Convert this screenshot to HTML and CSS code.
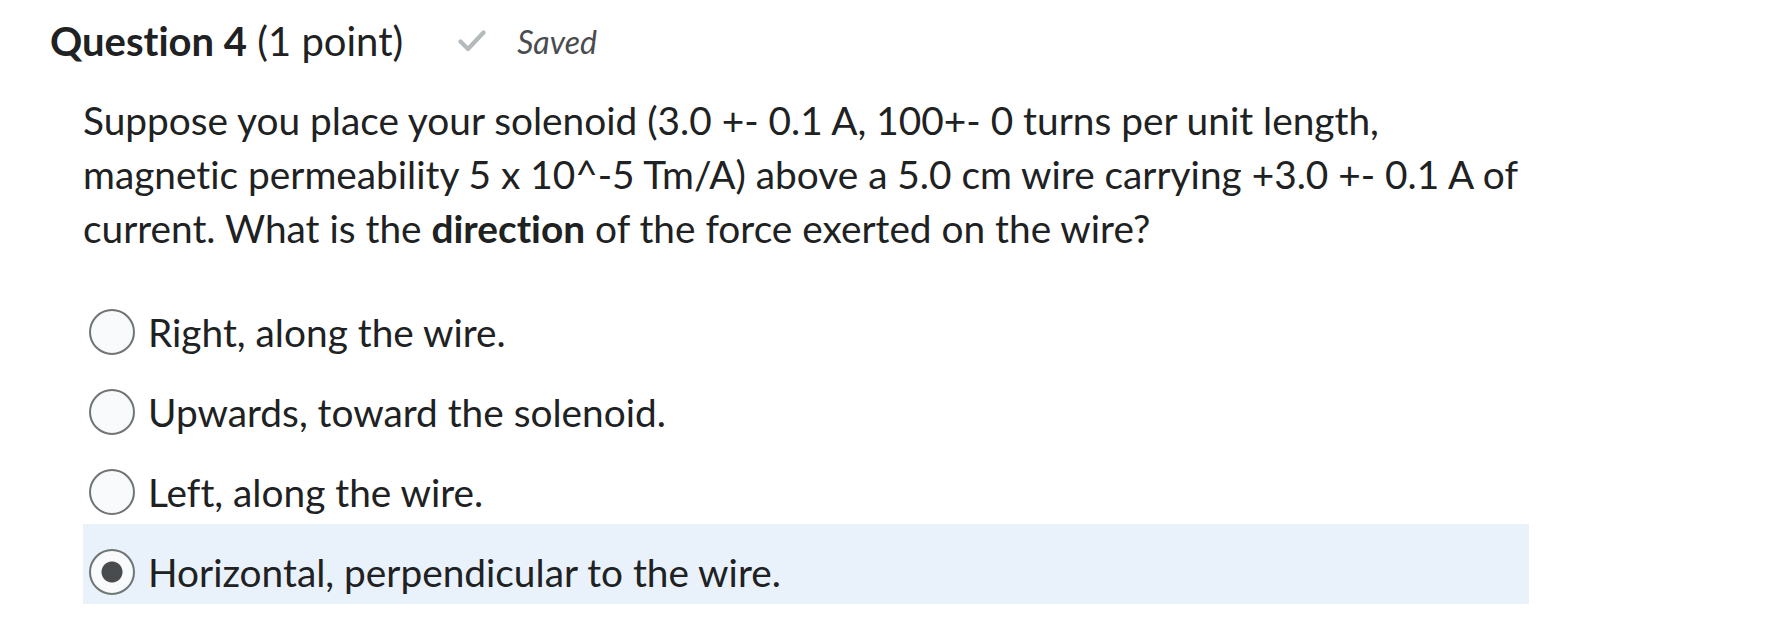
FILE: index.html
```html
<!DOCTYPE html>
<html lang="en">
<head>
    <meta charset="UTF-8">
    <meta name="viewport" content="width=device-width, initial-scale=1.0">
    <title>Question 4</title>
    <link rel="stylesheet" href="styles.css">
</head>
<body>
    <div class="question">
        <div class="question-header">
            <h2 class="question-title"><strong>Question 4</strong> (1 point)</h2>
            <span class="save-status">
                <svg class="check" width="28" height="22" viewBox="0 0 28 22" aria-hidden="true">
                    <path d="M2.5 11.5 L10 19 L25.5 2.5" fill="none" stroke="#b5babd" stroke-width="4.2" stroke-linecap="round" stroke-linejoin="round"/>
                </svg>
                Saved
            </span>
        </div>

        <div class="question-body">
            <p class="question-text">Suppose you place your solenoid (3.0 +- 0.1 A, 100+- 0 turns per unit length, magnetic permeability 5 x 10^-5 Tm/A) above a 5.0 cm wire carrying +3.0 +- 0.1 A of current. What is the <strong>direction</strong> of the force exerted on the wire?</p>

            <div class="choices">
                <label class="choice">
                    <input type="radio" name="q4" class="radio">
                    <span>Right, along the wire.</span>
                </label>
                <label class="choice">
                    <input type="radio" name="q4" class="radio">
                    <span>Upwards, toward the solenoid.</span>
                </label>
                <label class="choice">
                    <input type="radio" name="q4" class="radio">
                    <span>Left, along the wire.</span>
                </label>
                <label class="choice selected">
                    <input type="radio" name="q4" class="radio" checked>
                    <span>Horizontal, perpendicular to the wire.</span>
                </label>
            </div>
        </div>
    </div>
</body>
</html>
```

FILE: styles.css
```css
body {
    margin: 0;
    font-family: Lato, "Noto Sans", sans-serif;
    font-variant-ligatures: none;
    color: #202122;
    background: #fff;
}
.question-header {
    display: flex;
    align-items: center;
    padding: 17px 0 0 50px;
    height: 48px;
}
.question-title {
    margin: 0;
    font-size: 40px;
    font-weight: 400;
    line-height: 48px;
}
.question-title strong {
    font-weight: 700;
}
.save-status {
    display: flex;
    align-items: center;
    gap: 31px;
    margin-left: 55px;
    font-size: 32px;
    font-style: italic;
    color: #494c4e;
}
.question-body {
    width: 1446px;
    padding: 28px 0 0 83px;
}
.question-text {
    margin: 0;
    font-size: 38.8px;
    line-height: 54px;
}
.question-text strong {
    font-weight: 700;
}
.choices {
    margin-top: 29px;
}
.choice {
    display: flex;
    align-items: center;
    height: 64px;
    padding-top: 16px;
    font-size: 38.8px;
    line-height: 60px;
    cursor: pointer;
}
.choice.selected {
    background: #e9f1fb;
}
.radio {
    appearance: none;
    -webkit-appearance: none;
    box-sizing: border-box;
    width: 46px;
    height: 46px;
    margin: 0 13px 0 6px;
    border: 2px solid #6f7476;
    border-radius: 50%;
    background: #f9fafc;
    flex-shrink: 0;
}
.radio:checked {
    background: radial-gradient(circle, #494c4e 0 10px, #f9fafc 11px);
}
```
